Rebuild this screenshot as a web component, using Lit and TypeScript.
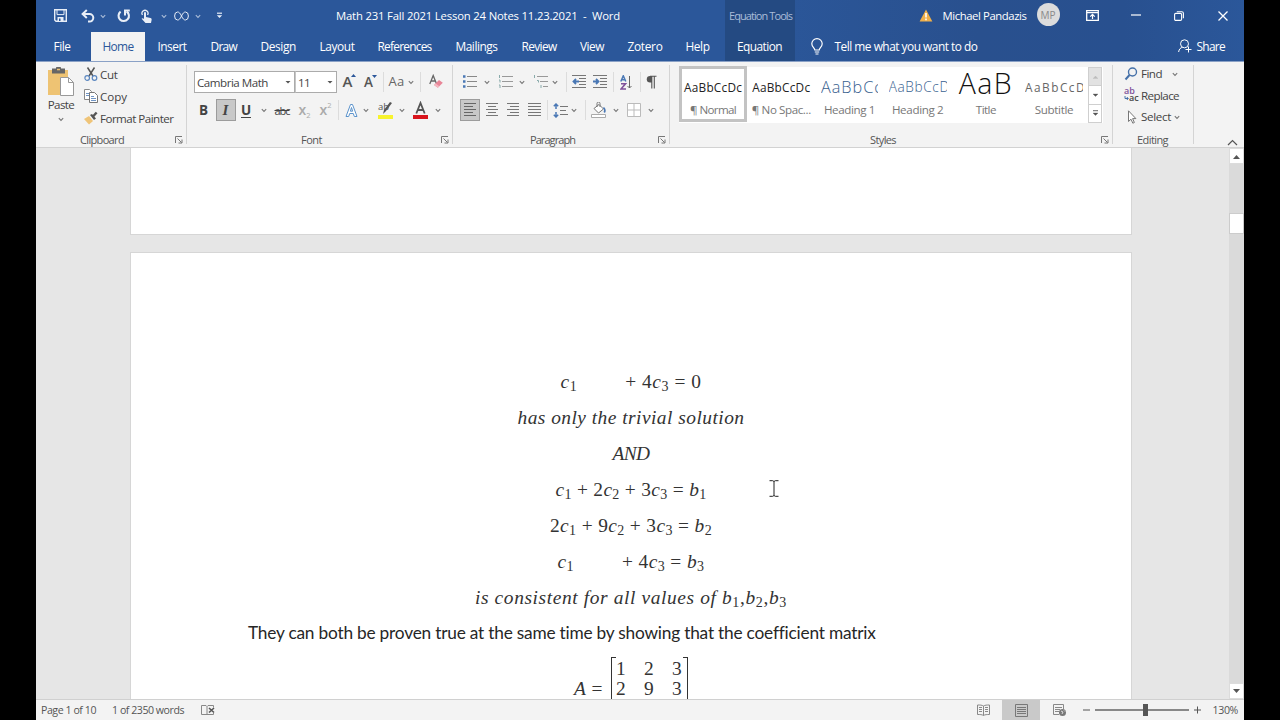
import { LitElement, html, svg, css, unsafeCSS } from "lit";
import { customElement } from "lit/decorators.js";

/* Turns a list of x positions into the left padding and track sizes of a toolbar grid. */
const cols = (origin: number, ...xs: number[]) =>
  unsafeCSS(
    `padding-left:${xs[0] - origin}px;grid-template-columns:${xs
      .slice(1)
      .map((x, i) => `${x - xs[i]}px`)
      .join(" ")} max-content`
  );

const icon = (w: number, h: number, body: unknown) =>
  html`<svg width=${w} height=${h} viewBox="0 0 ${w} ${h}" fill="none">${body}</svg>`;

/* Text run that is tracked to an exact advance width. */
const t = (text: unknown, w: number, cls = "") => html`<span class="fit ${cls}" data-w=${w}>${text}</span>`;

const chev = (c = "#777") => icon(6, 20, svg`<path d="M.8 9.2 3 11.4 5.2 9.2" stroke=${c} stroke-width="1.1"/>`);
const sep = () => html`<i class="sep"></i>`;
const lines = (rows: number[][], c = "#777") =>
  rows.map(([x, y, w]) => svg`<path d="M${x} ${y}h${w}" stroke=${c}/>`);
const launcher = () =>
  icon(8, 8, svg`<path d="M.5 7V.5H7M2.5 2.5l4 4M7 3.5V7H3.5" stroke="#777"/>`);

const c = (n: number) => html`<i>c</i><sub>${n}</sub>`;
const b = (n: number) => html`<i>b</i><sub>${n}</sub>`;

@customElement("app-root")
export class AppRoot extends LitElement {
  static styles = css`
    :host { display: block; width: 1280px; height: 720px; background: #000; overflow: hidden;
      font: 11.6px "Open Sans", "Noto Sans", sans-serif; color: #444; }
    * { box-sizing: border-box; }
    svg { display: block; flex: none; }
    .fit { display: inline-block; white-space: pre; }
    .win { width: 1208px; height: 720px; margin: 0 36px; display: flex; flex-direction: column; background: #f3f3f3; }
    .row { display: grid; align-items: center; justify-items: start; }

    .head { color: #fff; background: linear-gradient(90deg, #2b579a 0 60%, #29508e 78%, #28508f 90%, #2b579a); }
    .title { height: 31px; font-size: 11.3px; ${cols(36, 54, 80.5, 100, 116.5, 140, 161, 174, 195, 216, 336, 725, 919, 942.5, 1036.5, 1085.5, 1130.5, 1174, 1217.5)} }
    .tools { align-self: stretch; width: 70px; background: #244a82; color: #a9bcd8; display: flex; align-items: center; padding: 0 0 1px 4px; font-size: 11px; }
    .avatar { width: 23px; height: 23px; border-radius: 50%; background: #dcdcdc; color: #8a8a8a; font-size: 10px; display: flex; align-items: center; justify-content: center; margin-top: -2px; }
    .tabs { height: 30px; font-size: 11.9px; ${cols(36, 53.5, 91, 157.5, 210.5, 260.5, 319.5, 377.5, 455.5, 521.5, 580, 627.5, 685.5, 725, 811, 834.5, 1178, 1196.5)} }
    .home { align-self: stretch; width: 54px; background: #f3f3f3; color: #2b579a; display: flex; align-items: center; justify-content: center; margin-top: 1px; padding-bottom: 1px; }
    .eq { align-self: stretch; width: 70px; background: #244a82; display: flex; align-items: center; padding-left: 12px; }

    .ribbon { height: 87px; display: flex; border-bottom: 1px solid #d2d2d2; border-top: 1px solid #8aa1c6; background: #f3f3f3; }
    .group { height: 85px; display: flex; flex-direction: column; position: relative; }
    .group::after { content: ""; position: absolute; right: 0; top: 3px; bottom: 3px; width: 1px; background: #d4d4d4; }
    .foot { height: 15px; font-size: 11px; color: #555; margin-top: auto; }
    .r1 { height: 22px; margin-top: 9px; }
    .r2 { height: 22px; margin-top: 6px; }
    .sep { width: 1px; height: 20px; background: #dcdcdc; }

    .g-clip { width: 151px; }
    .clip { display: flex; padding: 1px 0 0 11.5px; }
    .paste { width: 27px; display: flex; flex-direction: column; align-items: center; margin-right: 9px; padding-top: 4px; }
    .paste span { margin-top: 0; line-height: 17px; }
    .paste svg + span + svg { margin-top: -4px; }
    .cmds { display: flex; flex-direction: column; }
    .cmd { height: 22px; display: flex; align-items: center; }
    .cmd svg { margin-right: 2.5px; }
    .f-clip { ${cols(36, 80, 175)} }

    .g-font { width: 266px; }
    .f1 { ${cols(187, 194, 342.5, 364, 383, 388.5, 408, 420, 429)} }
    .f2 { ${cols(187, 199, 215.5, 241, 261, 274.5, 298.5, 319.5, 338, 344.5, 363, 378, 399, 413, 435)} }
    .f-font { ${cols(187, 301, 441)} }
    .combos { display: flex; }
    .combo { height: 22px; width: 101px; border: 1px solid #ababab; background: #fff; display: flex; align-items: center; justify-content: space-between; padding: 0 3px 0 2px; }
    .combo.size { width: 42px; border-left-color: #c6c6c6; }
    .glyph { font-weight: 700; font-size: 13.5px; line-height: 20px; }
    .und { border-bottom: 1.5px solid #444; line-height: 14px; height: 15px; }
    .on { width: 20px; height: 22px; background: #c8c8c8; border: 1px solid #9c9c9c; display: flex; align-items: center; justify-content: center; }
    .ital { font: italic 700 15px "Liberation Serif", serif; }
    .strike { text-decoration: line-through; font-size: 11px; }
    .dim { color: #aaa; font-size: 14px; font-weight: 600; display: flex; line-height: 18px; }
    .dim small { font-size: 7.5px; align-self: flex-end; line-height: 8px; font-weight: 400; }
    .dim small.up { align-self: flex-start; }
    .inc { font-size: 15px; line-height: 20px; display: flex; margin-top: -2px; font-weight: 600; color: #555; }
    .dec { font-size: 13.5px; margin-top: -1px; }
    .caret { margin: 2px 0 0 -1px; }
    .aa { font-size: 13px; color: #666; margin-top: -2px; }

    .g-para { width: 217px; }
    .p1 { ${cols(453, 462, 484, 498, 519, 533, 552, 566, 572, 593, 613, 620, 640, 646)} }
    .p2 { ${cols(453, 459.5, 485, 506, 527, 547, 553, 571, 585, 591, 613, 627, 648)} }
    .f-para { ${cols(453, 530, 658)} }

    .g-styles { width: 443px; }
    .gallery { display: flex; margin: 5px 0 0 9px; height: 56px; width: 424px; background: #fff; padding-right: 1px; }
    .style { width: 68.2px; display: flex; flex-direction: column; align-items: center; color: #777; overflow: hidden; flex: none; padding-top: 3px; }
    .style.sel { border: 3px solid #c3c3c3; margin-top: -1px; height: 56px; padding-top: 1px; }
    .sample { height: 30px; display: flex; align-items: center; justify-content: center; overflow: hidden; color: #222; font-size: 11.8px; padding-top: 3px; width: 60px; flex: none; }
    .h1 { font-size: 16.3px; font-weight: 300; color: #38618f; justify-content: flex-start; width: 57px; }
    .h2 { font-size: 13.7px; font-weight: 300; color: #38618f; justify-content: flex-start; width: 58px; }
    .big { font-size: 28.5px; font-weight: 300; padding-top: 0; color: #111; line-height: 28px; height: 28px; margin: -1px 0 3px; }
    .subt { color: #666; justify-content: flex-start; width: 58px; }
    .name { line-height: 14px; margin-top: 3px; }
    .spin { margin-left: auto; width: 14px; display: flex; flex-direction: column; border: 1px solid #cfcfcf; }
    .spin div { flex: 1; display: flex; align-items: center; justify-content: center; border-bottom: 1px solid #cfcfcf; }
    .spin div:first-child { background: #e2e2e2; }
    .spin div:last-child { border: 0; }
    .f-styles { ${cols(670, 870, 1101)} }

    .g-edit { width: 81px; }
    .edit { padding: 1px 0 0 10.5px; }
    .edit .cmd { height: 21.5px; }
    .edit .cmd > svg + .fit + svg { margin-left: 3px; }
    .edit .cmd.find > svg + .fit + svg { margin-left: 10px; }
    .mini { font-weight: 600; font-size: 9px; }
    .f-edit { ${cols(1113, 1137)} }
    .collapse { margin: auto 6px 1px auto; }

    .doc { height: 552px; display: flex; background: #e6e6e6; overflow: hidden; position: relative; }
    .pages { width: 1002px; margin-left: 94px; display: flex; flex-direction: column; gap: 18px; }
    .page { background: #fff; border: 1px solid #d6d6d6; flex: none; }
    .one { height: 87px; border-top: 0; }
    .two { height: 900px; margin-top: -1px; padding-top: 111.4px; font: 19.4px "Liberation Serif", serif; color: #333; }
    .line { height: 35.9px; display: flex; align-items: center; justify-content: center; }
    .line sub { font-size: 14px; vertical-align: -3px; line-height: 0; }
    .gap { display: inline-block; width: 48px; }
    .line.body { justify-content: flex-start; padding: 0 0 2px 117px; font: 17.3px Lato, sans-serif; color: #262626; }
    .mat { display: flex; justify-content: center; padding-top: 5px; line-height: 24px; }
    .lhs { padding-top: 20.5px; width: 37px; }
    .grid { height: 64px; display: grid; grid-template-columns: 28px 28px 10px; grid-auto-rows: 20.5px; padding: 0 4px; width: 77px;
      border: solid #333; border-width: 0 1.4px; background: linear-gradient(#333, #333) 0 0 / 4px 1px no-repeat, linear-gradient(#333, #333) 100% 0 / 4px 1px no-repeat; }
    .ibeam { position: absolute; left: 733px; top: 332px; }
    .bar { margin-left: auto; width: 15px; background: #dadada; display: flex; flex-direction: column; }
    .btn { height: 16px; background: #fff; border: 1px solid #dcdcdc; display: flex; align-items: center; justify-content: center; }
    .thumb { height: 21px; margin-top: 49px; background: #fff; border: 1px solid #ccc; }
    .down { margin-top: auto; }

    .status { height: 21px; border-top: 1px solid #d0d0d0; background: #f3f3f3; font-size: 10.6px; color: #555; ${cols(36, 41, 112, 201, 977, 1002, 1053, 1083, 1095, 1194, 1212.5)} }
    .view { width: 38px; height: 20px; background: #c9c9c9; display: flex; align-items: center; justify-content: center; }
  `;

  firstUpdated() {
    this.renderRoot.querySelectorAll<HTMLElement>(".fit").forEach((el) => {
      const n = (el.textContent ?? "").length;
      const extra = Number(el.dataset.w) - el.getBoundingClientRect().width;
      el.style.letterSpacing = `${(extra / n).toFixed(3)}px`;
    });
  }

  private head() {
    const w = "#e8eef7";
    return html`<div class="head">
      <div class="row title">
        ${icon(13, 13, svg`<path d="M.7.7h11.6v11.6H2L.7 11z" stroke=${w} stroke-width="1.4"/><path d="M3 1v4.6h7V1" stroke=${w}/><path d="M3.5 8h6v4h-6z" fill=${w}/><path d="M5 9.5h1.5V12H5z" fill="#2b579a"/>`)}
        ${icon(14, 14, svg`<path d="M2 5h6.5a3.8 3.8 0 0 1 0 7.6H7" stroke=${w} stroke-width="2"/><path d="M5.8 1 1.6 5l4.2 4" stroke=${w} stroke-width="2"/>`)}
        ${chev("#a9bcd8")}
        ${icon(14, 14, svg`<path d="M3.6 2.7a5.2 5.2 0 1 0 6-.2" stroke=${w} stroke-width="2.1"/><path d="M8 6.5V1.5h4.8" stroke=${w} stroke-width="2"/>`)}
        ${icon(13, 14, svg`<path d="M2.5 6a3 3 0 1 1 5 0" stroke=${w} stroke-width="1.3"/><path d="M4 4a1 1 0 0 1 2 0v4l4.5 1c1 .3 1.3 1 1.1 2l-.6 3H5.5L1.6 9.8c.5-.9 1.4-.8 2.4.2z" fill=${w}/>`)}
        ${chev("#a9bcd8")}
        ${icon(15, 10, svg`<path d="M7.5 5C6 2 5 1 3.6 1a3 4 0 0 0 0 8C5 9 6 8 7.5 5S10 1 11.4 1a3 4 0 0 1 0 8C10 9 9 8 7.5 5z" stroke=${w}/>`)}
        ${chev("#a9bcd8")}
        ${icon(7, 7, svg`<path d="M1 1.2h5" stroke=${w} stroke-width="1.2"/><path d="M.8 3.2h5.4L3.5 6z" fill=${w}/>`)}
        ${t("Math 231 Fall 2021 Lesson 24 Notes 11.23.2021  -  Word", 284)}
        <div class="tools">${t("Equation Tools", 63)}</div>
        ${icon(14, 13, svg`<path d="M7 .6 13.4 12.4H.6z" fill="#f0b04a"/><path d="M7 4v4.6M7 9.6v1.6" stroke="#fff" stroke-width="1.6"/>`)}
        ${t("Michael Pandazis", 84)}
        <div class="avatar">MP</div>
        ${icon(13, 11, svg`<path d="M.7.7h11.6v9.6H.7zM.7 2.6h11.6" stroke="#fff" stroke-width="1.3"/><path d="M6.5 9V4.6M4.2 6.6l2.3-2.2 2.3 2.2" stroke="#fff" stroke-width="1.2"/>`)}
        ${icon(10, 10, svg`<path d="M0 4h10" stroke="#fff" stroke-width="1.2"/>`)}
        ${icon(10, 10, svg`<rect x=".6" y="2.4" width="7" height="7" rx="1.2" stroke="#fff" stroke-width="1.1"/><path d="M2.8.7h5a1.6 1.6 0 0 1 1.6 1.6v5" stroke="#fff" stroke-width="1.1"/>`)}
        ${icon(10, 10, svg`<path d="M.5.5l9 9M9.5.5l-9 9" stroke="#fff" stroke-width="1.3"/>`)}
      </div>
      <div class="row tabs">
        ${t("File", 17)}
        <div class="home">${t("Home", 31)}</div>
        ${t("Insert", 29)}${t("Draw", 26.5)}${t("Design", 35.5)}${t("Layout", 35)}${t("References", 54)}${t("Mailings", 42)}
        ${t("Review", 35)}${t("View", 24)}${t("Zotero", 35)}${t("Help", 24)}
        <div class="eq">${t("Equation", 45)}</div>
        ${icon(12, 17, svg`<path d="M3.8 12c0-2-3-3-3-6.2a5.2 5.2 0 0 1 10.4 0C11.2 9 8.2 10 8.2 12z" stroke="#fff" stroke-width="1.2"/><path d="M3.8 14h4.4M4.5 16h3" stroke="#fff"/>`)}
        ${t("Tell me what you want to do", 143)}
        ${icon(14, 14, svg`<circle cx="6.5" cy="4.8" r="4" stroke="#fff"/><path d="M.6 13c.4-3 2-4.3 4-4.7M10.5 7.5v6M7.5 10.5h6" stroke="#fff"/>`)}
        ${t("Share", 28.5)}
      </div>
    </div>`;
  }

  private clipboard() {
    return html`<div class="group g-clip">
      <div class="clip">
        <div class="paste">
          ${icon(26, 29, svg`<path d="M0 3h20v25H0z" fill="#eec373"/><path d="M4 1.5h4a2.3 2.3 0 0 1 5 0h4v5H4z" fill="#666"/><path d="M9 1.8h3v1.5H9z" fill="#eec373"/><path d="M12.5 10.5h8l5 5v13h-13z" fill="#fff" stroke="#999"/><path d="M20.5 10.5v5h5" stroke="#999"/>`)}
          ${t("Paste", 26.5)}${chev()}
        </div>
        <div class="cmds">
          <div class="cmd">${icon(14, 14, svg`<path d="M3.5.5 9 9M10.5.5 5 9" stroke="#555" stroke-width="1.5"/><circle cx="3.2" cy="11" r="2.3" stroke="#5b87c0" stroke-width="1.2"/><circle cx="10.5" cy="11" r="2.3" stroke="#5b87c0" stroke-width="1.2"/>`)}${t("Cut", 17.5)}</div>
          <div class="cmd">${icon(14, 14, svg`<path d="M.5.5h5l2 2v8h-7z" fill="#fff" stroke="#888"/><path d="M5.5 3.5h5l3 3v7h-8z" fill="#fff" stroke="#777"/><path d="M2 4.5h3M2 6.5h3M7 7.5h3M7 9.5h5M7 11.5h5" stroke="#6f94c4"/>`)}${t("Copy", 27)}</div>
          <div class="cmd">${icon(14, 14, svg`<path d="m0 8 5-3 4 5-4 3.5z" fill="#efc478"/><path d="M6 4l4 5 2-1.5L8 3z" fill="#555"/><path d="m9 5.5 3.6-4" stroke="#555" stroke-width="2.4"/>`)}${t("Format Painter", 73.5)}</div>
        </div>
      </div>
      <div class="row foot f-clip">${t("Clipboard", 44)}${launcher()}</div>
    </div>`;
  }

  private font() {
    const drop = icon(6, 20, svg`<path d="M.5 9h5L3 11.5z" fill="#555"/>`);
    return html`<div class="group g-font">
      <div class="row r1 f1">
        <div class="combos">
          <div class="combo">${t("Cambria Math", 71)}${drop}</div>
          <div class="combo size">${t("11", 12)}${drop}</div>
        </div>
        <div class="inc">A<svg class="caret" width="5" height="5"><path d="M0 4 2.5 1 5 4z" fill="#2b579a"/></svg></div>
        <div class="inc dec">A<svg class="caret" width="5" height="5"><path d="M0 1h5L2.5 4z" fill="#2b579a"/></svg></div>
        ${sep()}${t("Aa", 16, "aa")}${chev()}${sep()}
        ${icon(14, 16, svg`<path d="M.8 10 4.2 1.5 7.6 10M2 7h4.5" stroke="#666" stroke-width="1.3"/><path d="m5 11 5-5 3.8 2.8-5 5z" fill="#e88597"/><path d="m5 11 1.6-1.6 3.8 2.8-1.6 1.6z" fill="#f4b6c0"/>`)}
      </div>
      <div class="row r2 f2">
        <span class="glyph">B</span>
        <div class="on"><span class="ital">I</span></div>
        <span class="glyph und">U</span>${chev()}
        ${t("abc", 15, "strike")}
        <span class="dim">x<small>2</small></span><span class="dim">x<small class="up">2</small></span>
        ${sep()}
        ${icon(14, 15, svg`<path d="M1 13.5 5.5 1.5h2L12 13.5H9.3L8.3 10.5H4.7L3.7 13.5zM5.4 8.2h2.2L6.5 4.5z" fill="#fff" stroke="#5b93cc"/>`)}${chev()}
        ${icon(16, 18, svg`<path d="M0 14h15v4H0z" fill="#f7f32d"/><path d="m14 2-6 8-3 3 1-4 6-8z" fill="#555"/><text x="0" y="9" font-size="9.5" fill="#555">ab</text>`)}${chev()}
        ${icon(16, 18, svg`<path d="M0 14h15v4H0z" fill="#d8141c"/><path d="M3.3 12.5 7.5 2 11.7 12.5M5 9h5" stroke="#555" stroke-width="1.8"/>`)}${chev()}
      </div>
      <div class="row foot f-font">${t("Font", 21)}${launcher()}</div>
    </div>`;
  }

  private paragraph() {
    const blue = "#4a78b5";
    const indent = (d: string) =>
      icon(15, 14, svg`${lines([[0, 0.5, 14], [7, 3.5, 7], [7, 6.5, 7], [7, 9.5, 7], [0, 12.5, 14]])}<path d=${d} stroke=${blue} stroke-width="1.8"/>`);
    return html`<div class="group g-para">
      <div class="row r1 p1">
        ${icon(15, 14, svg`${lines([[5, 1.5, 10], [5, 6.5, 10], [5, 11.5, 10]], "#888")}<path d="M1 .2h2.5v2.5H1zM1 5.2h2.5v2.5H1zM1 10.2h2.5v2.5H1z" fill=${blue}/>`)}${chev()}
        ${icon(15, 14, svg`${lines([[4, 1.5, 11], [4, 6.5, 11], [4, 11.5, 11]], "#999")}<path d="M1.5 0v3M1 5h1v2.5M1 10h1v3" stroke="#8aa"/>`)}${chev()}
        ${icon(15, 14, svg`${lines([[4, 1.5, 11], [7, 6.5, 8], [10, 11.5, 5]], "#999")}<path d="M1.5 0v3M4 5.5h1.5v2M8 10v3" stroke="#8aa"/>`)}${chev()}
        ${sep()}
        ${indent("M7 6.5H1.5M4 4 1.5 6.5 4 9")}
        ${indent("M0 6.5h5.5M3 4l2.5 2.5L3 9")}
        ${sep()}
        ${icon(12, 15, svg`<path d="M.8 6.5 3.3.8 5.8 6.5M1.8 4.8h3" stroke=${blue} stroke-width="1.5"/><path d="M1 8.8h4.5L1 14h5" stroke="#80529a" stroke-width="1.6"/><path d="M9.5 1v12M7.5 11l2 2 2-2" stroke="#666"/>`)}
        ${sep()}
        ${icon(11, 14, svg`<path d="M6 1H4a3.2 3.2 0 0 0 0 6.4h2z" fill="#555"/><path d="M5.8 1v12.5M8.3 1v12.5M4 1.2h6.5" stroke="#555" stroke-width="1.1"/>`)}
      </div>
      <div class="row r2 p2">
        <div class="on">${icon(14, 16, lines([[1, 1.5, 12], [1, 4.5, 9], [1, 7.5, 12], [1, 10.5, 9], [1, 13.5, 12]], "#666"))}</div>
        ${icon(14, 16, lines([[1, 1.5, 12], [3, 4.5, 8], [1, 7.5, 12], [3, 10.5, 8], [1, 13.5, 12]]))}
        ${icon(14, 16, lines([[1, 1.5, 12], [4, 4.5, 9], [1, 7.5, 12], [4, 10.5, 9], [1, 13.5, 12]]))}
        ${icon(14, 16, lines([[1, 1.5, 13], [1, 4.5, 13], [1, 7.5, 13], [1, 10.5, 13], [1, 13.5, 13]]))}
        ${sep()}
        ${icon(15, 15, svg`${lines([[7, 3.5, 8], [7, 7.5, 6], [7, 11.5, 8]])}<path d="M3 1v5M3 9v5M.8 3.2 3 1l2.2 2.2M.8 11.8 3 14l2.2-2.2" stroke=${blue} stroke-width="1.5"/>`)}${chev()}
        ${sep()}
        ${icon(16, 16, svg`<path d="M.5 12.5h14v3H.5z" fill="#fff" stroke="#aaa"/><path d="m3 6.5 5-4 4.5 4.5-5 4z" fill="#fff" stroke="#777"/><path d="M6 5V1.5a1.5 1.5 0 0 1 3 0V5" stroke="#777"/><path d="M12.5 5.5c1.5 1.5 1.7 3.5.8 5" stroke=${blue} stroke-width="1.6"/>`)}${chev()}
        ${icon(14, 14, svg`<path d="M.5.5h13v13H.5zM7 .5v13M.5 7h13" fill="#fff" stroke="#bbb"/>`)}${chev()}
      </div>
      <div class="row foot f-para">${t("Paragraph", 45)}${launcher()}</div>
    </div>`;
  }

  private styleSet() {
    const cell = (sample: string, w: number, name: string, nw: number, cls = "", sel = "") => html`
      <div class="style ${sel}"><div class="sample ${cls}">${t(sample, w)}</div><span class="name">${t(name, nw)}</span></div>`;
    const tri = (d: string, f: string) => icon(5, 8, svg`<path d=${d} fill=${f} stroke=${f} stroke-width=".3"/>`);
    return html`<div class="group g-styles">
      <div class="gallery">
        ${cell("AaBbCcDc", 58, "¶ Normal", 46, "", "sel")}
        ${cell("AaBbCcDc", 58, "¶ No Spac...", 59)}
        ${cell("AaBbCc", 62, "Heading 1", 51, "h1")}
        ${cell("AaBbCcD", 61, "Heading 2", 51.5, "h2")}
        ${cell("AaB", 54, "Title", 20, "big")}
        ${cell("AaBbCcD", 61, "Subtitle", 38.5, "subt")}
        <div class="spin">
          <div>${tri("M0 5.5h5L2.5 3z", "#bbb")}</div>
          <div>${tri("M0 3h5L2.5 5.5z", "#555")}</div>
          <div>${tri("M0 1.5h5v.6H0zM0 4h5L2.5 6.5z", "#555")}</div>
        </div>
      </div>
      <div class="row foot f-styles">${t("Styles", 26)}${launcher()}</div>
    </div>`;
  }

  private editing() {
    return html`<div class="group g-edit">
      <div class="edit">
        <div class="cmd find">${icon(15, 14, svg`<circle cx="8.5" cy="5" r="4" stroke="#4470a8" stroke-width="1.4"/><path d="m5.5 8-4 4.5" stroke="#4470a8" stroke-width="2"/>`)}${t("Find", 21)}${chev()}</div>
        <div class="cmd">${icon(15, 16, svg`<text class="mini" x="0" y="7" fill="#80529a">ab</text><text class="mini" x="5" y="14" fill="#444">ac</text><path d="M1 9v2.5h3M2.8 10l1.5 1.5L2.8 13" stroke="#4470a8"/>`)}${t("Replace", 38)}</div>
        <div class="cmd">${icon(15, 14, svg`<path d="M4.5.8v10.7l2.5-2.3 1.8 4 1.6-.7-1.8-3.9h3.3z" fill="#fff" stroke="#777"/>`)}${t("Select", 30)}${chev()}</div>
      </div>
      <div class="row foot f-edit">${t("Editing", 31)}</div>
    </div>`;
  }

  render() {
    return html`<div class="win">
      ${this.head()}
      <div class="ribbon">
        ${this.clipboard()}${this.font()}${this.paragraph()}${this.styleSet()}${this.editing()}
        <div class="collapse">${icon(11, 7, svg`<path d="M1 6 5.5 1.5 10 6" stroke="#555" stroke-width="1.2"/>`)}</div>
      </div>
      <div class="doc">
        <div class="pages">
          <div class="page one"></div>
          <div class="page two">
            <div class="line">${t(html`${c(1)}<span class="gap"></span>+ 4${c(3)} = 0`, 141)}</div>
            <div class="line">${t(html`<i>has only the trivial solution</i>`, 227)}</div>
            <div class="line">${t(html`<i>AND</i>`, 37)}</div>
            <div class="line">${t(html`${c(1)} + 2${c(2)} + 3${c(3)} = ${b(1)}`, 151)}</div>
            <div class="line">${t(html`2${c(1)} + 9${c(2)} + 3${c(3)} = ${b(2)}`, 162)}</div>
            <div class="line">${t(html`${c(1)}<span class="gap"></span>+ 4${c(3)} = ${b(3)}`, 147)}</div>
            <div class="line">${t(html`<i>is consistent for all values of </i>`, 247)}${t(html`${b(1)},${b(2)},${b(3)}`, 65)}</div>
            <div class="line body">${t("They can both be proven true at the same time by showing that the coefficient matrix", 627)}</div>
            <div class="mat">
              <div class="lhs">${t(html`<i>A</i> =`, 29)}</div>
              <div class="grid"><span>1</span><span>2</span><span>3</span><span>2</span><span>9</span><span>3</span></div>
            </div>
          </div>
        </div>
        <svg class="ibeam" width="10" height="17" viewBox="0 0 10 17" fill="none"><path d="M.5.7h3.2L5 1.5 6.3.7h3.2M5 1.5v14M.5 16.3h3.2L5 15.5l1.3.8h3.2" stroke="#222"/></svg>
        <div class="bar">
          <div class="btn">${icon(7, 5, svg`<path d="M0 5 3.5 1 7 5z" fill="#555"/>`)}</div>
          <div class="thumb"></div>
          <div class="btn down">${icon(7, 5, svg`<path d="M0 0h7L3.5 4z" fill="#555"/>`)}</div>
        </div>
      </div>
      <div class="row status">
        ${t("Page 1 of 10", 55)}${t("1 of 2350 words", 72)}
        ${icon(14, 12, svg`<path d="M6 10.5H.5v-9H5l1 1zM6 2.5l1-1h5.5v2M6 10.5h6.5V9" stroke="#888"/><path d="m8 4 5 4.5M13 4 8 8.5" stroke="#555" stroke-width="1.6"/>`)}
        ${icon(14, 12, svg`<path d="M6.5 2C5 1 3 1 .5 1v9.5c2.5 0 4.5 0 6 1 1.5-1 3.5-1 6-1V1c-2.5 0-4.5 0-6 1zV11.5M2 3.5h3M2 5.5h3M2 7.5h3M8 3.5h3M8 5.5h3M8 7.5h3" stroke="#888"/>`)}
        <div class="view">${icon(13, 13, svg`<path d="M.5.5h12v12H.5z" stroke="#777"/>${lines([[2, 3.5, 9], [2, 5.5, 9], [2, 7.5, 9], [2, 9.5, 9]])}`)}</div>
        ${icon(14, 13, svg`<path d="M6 10.5H.5V.5h10V5M2 3.5h7M2 5.5h5M2 7.5h4" stroke="#888"/><circle cx="9.5" cy="8.5" r="3.5" fill="#777"/><path d="M8 7l2 1-1 2M11 6.5l1 1" stroke="#ddd"/>`)}
        ${icon(8, 8, svg`<path d="M0 4h7" stroke="#555"/>`)}
        ${icon(95, 12, svg`<path d="M0 6h94" stroke="#666" stroke-width="1.4"/><path d="M48 0h5v12h-5z" fill="#555"/>`)}
        ${icon(8, 8, svg`<path d="M0 4h7M3.5.5v7" stroke="#555"/>`)}
        ${t("130%", 25.5)}
      </div>
    </div>`;
  }
}
